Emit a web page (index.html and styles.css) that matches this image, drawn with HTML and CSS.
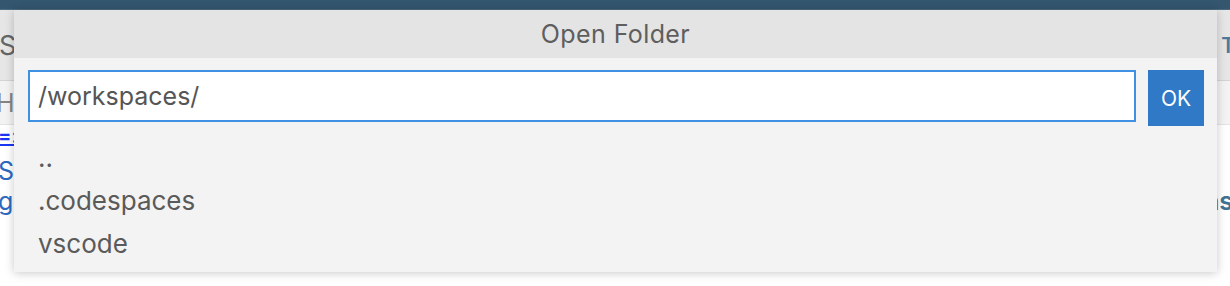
FILE: index.html
```html
<!DOCTYPE html>
<html>
<head>
<meta charset="utf-8">
<link rel="stylesheet" href="styles.css">
</head>
<body>
<div class="topbar"></div>
<div class="app">
  <div class="app-header">
    <span class="app-title">S</span>
    <span class="app-tab">T</span>
  </div>
  <div class="app-sub">
    <span class="sub-text">Hi</span>
  </div>
  <div class="app-content">
    <div class="line line-1"><span class="link">=:</span></div>
    <div class="line line-2"><span class="blue">Sc</span></div>
    <div class="line line-3"><span class="blue">gs</span><span class="teal">as</span></div>
  </div>

  <div class="dialog">
    <div class="dialog-title">Open Folder</div>
    <div class="dialog-body">
      <div class="input-row">
        <div class="input">/workspaces/</div>
        <button class="ok">OK</button>
      </div>
      <ul class="list">
        <li>..</li>
        <li>.codespaces</li>
        <li>vscode</li>
      </ul>
    </div>
  </div>
</div>
</body>
</html>
```

FILE: styles.css
```css
html, body {
  margin: 0;
  padding: 0;
  background: #ffffff;
  font-family: "Inter", "Liberation Sans", sans-serif;
  overflow: hidden;
  width: 1230px;
  height: 286px;
}

.topbar {
  height: 9px;
  background: #34566f;
  border-bottom: 1px solid #4c6b82;
}

.app {
  position: relative;
  height: 276px;
}

.app-header {
  height: 70px;
  background: #e6e6e6;
  border-bottom: 1px solid #d4d4d4;
  display: flex;
  justify-content: space-between;
  align-items: center;
  font-size: 27px;
  color: #666666;
}

.app-title {
  margin-left: -1px;
}

.app-tab {
  color: #4a7b9c;
  font-weight: 600;
  font-size: 21px;
  margin-right: -5px;
}

.app-sub {
  height: 43px;
  background: #f3f3f3;
  border-bottom: 1px solid #e4e4e4;
  display: flex;
  align-items: center;
  font-size: 25px;
  color: #858585;
}

.sub-text {
  margin-left: -4px;
}

.app-content {
  font-size: 25px;
}

.line {
  display: flex;
  justify-content: space-between;
  align-items: center;
}

.line-1 {
  height: 22px;
}

.line-2 {
  margin-top: 10px;
  height: 28px;
}

.line-3 {
  height: 32px;
}

.link {
  color: #1a36f0;
  text-decoration: underline;
  font-size: 20px;
  margin-left: -2px;
  font-weight: 600;
}

.blue {
  color: #2c6ac0;
  margin-left: -2px;
}

.teal {
  color: #3e7394;
  margin-right: -3px;
  font-weight: 600;
}

.dialog {
  position: absolute;
  left: 14px;
  top: 0;
  width: 1203px;
  height: 262px;
  background: #f3f3f3;
  box-shadow: 0 1px 9px rgba(0, 0, 0, 0.22);
  display: flex;
  flex-direction: column;
}

.dialog-title {
  height: 48px;
  background: #e4e4e4;
  display: flex;
  align-items: center;
  justify-content: center;
  font-size: 25px;
  letter-spacing: 0.4px;
  color: #5e5e5e;
}

.dialog-body {
  padding: 12px 13px 0 14px;
}

.input-row {
  display: flex;
  gap: 12px;
  align-items: flex-start;
}

.input {
  flex: 1;
  height: 48px;
  border: 2px solid #3f90e3;
  background: #ffffff;
  box-sizing: content-box;
  display: flex;
  align-items: center;
  padding-left: 8px;
  font-size: 25px;
  color: #555555;
}

.ok {
  width: 56px;
  height: 56px;
  border: none;
  background: #3079c7;
  color: #ffffff;
  font-family: inherit;
  font-size: 21px;
  padding: 0;
  margin: 0;
}

.list {
  list-style: none;
  margin: 10px 0 0 0;
  padding: 0;
}

.list li {
  height: 43px;
  display: flex;
  align-items: center;
  padding-left: 10px;
  font-size: 26px;
  color: #5a5a5a;
}
```
